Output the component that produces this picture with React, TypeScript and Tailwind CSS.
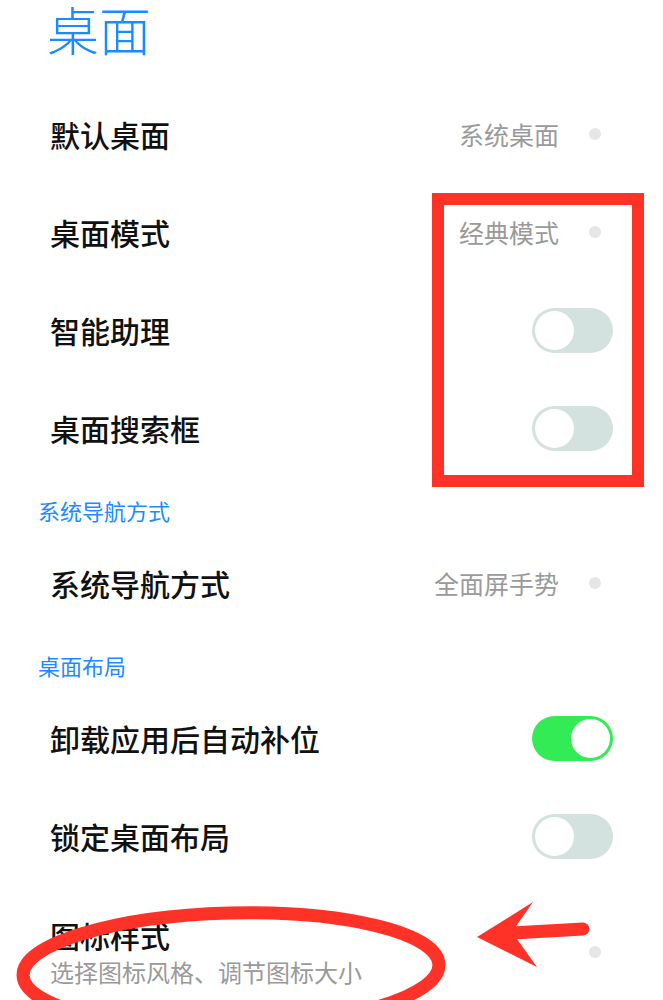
import React from "react";

const FONT = { fontFamily: '"Noto Sans CJK SC", "Noto Sans", sans-serif' };

function Dot() {
  return <span className="ml-[30px] mr-[12px] inline-block h-[12px] w-[12px] rounded-full bg-[#e6e6e6]" />;
}

function Toggle({ on }: { on: boolean }) {
  return (
    <div
      className={
        "flex h-[45px] w-[81px] items-center rounded-full p-[3px] " +
        (on ? "justify-end bg-[#33ec55]" : "justify-start bg-[#d4e2df]")
      }
    >
      <div className="h-[39px] w-[39px] rounded-full bg-white" />
    </div>
  );
}

function Row({ label, value, toggle }: { label: string; value?: string; toggle?: boolean }) {
  return (
    <div className="flex h-[98px] items-center justify-between pl-[50px] pr-[50px]">
      <span className="text-[30px] font-medium leading-[36px] text-[#111111]">{label}</span>
      {value !== undefined ? (
        <div className="flex items-center">
          <span className="text-[25px] leading-[30px] text-[#9a9a9a]">{value}</span>
          <Dot />
        </div>
      ) : (
        <Toggle on={!!toggle} />
      )}
    </div>
  );
}

function Header({ text }: { text: string }) {
  return (
    <div className="h-[57px] pl-[38px] pt-[20px]">
      <span className="block text-[22px] leading-[26px] text-[#1a8cff]">{text}</span>
    </div>
  );
}

export default function App() {
  return (
    <div className="relative h-[1000px] w-[663px] overflow-hidden bg-white" style={FONT}>
      <div className="h-[85px] pl-[47px] pt-[1px]">
        <span className="block text-[52px] font-light leading-[56px] text-[#1a8cff]">桌面</span>
      </div>
      <Row label="默认桌面" value="系统桌面" />
      <Row label="桌面模式" value="经典模式" />
      <Row label="智能助理" toggle={false} />
      <Row label="桌面搜索框" toggle={false} />
      <Header text="系统导航方式" />
      <Row label="系统导航方式" value="全面屏手势" />
      <Header text="桌面布局" />
      <Row label="卸载应用后自动补位" toggle={true} />
      <Row label="锁定桌面布局" toggle={false} />
      <div className="flex items-start justify-between pl-[50px] pr-[50px] pt-[32px]">
        <div className="flex flex-col">
          <span className="text-[30px] font-medium leading-[36px] text-[#111111]">图标样式</span>
          <span className="mt-[4px] text-[24px] leading-[30px] text-[#9a9a9a]">选择图标风格、调节图标大小</span>
        </div>
        <div className="mt-[29px] flex items-center">
          <Dot />
        </div>
      </div>

      {/* annotations */}
      <div className="pointer-events-none absolute left-[432px] top-[193px] h-[294px] w-[212px] border-[12px] border-[#ff3228]" />
      <svg className="pointer-events-none absolute left-0 top-0" width="663" height="1000" viewBox="0 0 663 1000">
        <ellipse
          cx="231"
          cy="970"
          rx="208"
          ry="57"
          fill="none"
          stroke="#ff3228"
          strokeWidth="13"
          transform="rotate(-1.5 231 970)"
        />
        <line x1="512" y1="933" x2="583" y2="929" stroke="#ff3228" strokeWidth="13" strokeLinecap="round" />
        <polygon points="477,937 533,902 512,932 537,967" fill="#ff3228" />
      </svg>
    </div>
  );
}
